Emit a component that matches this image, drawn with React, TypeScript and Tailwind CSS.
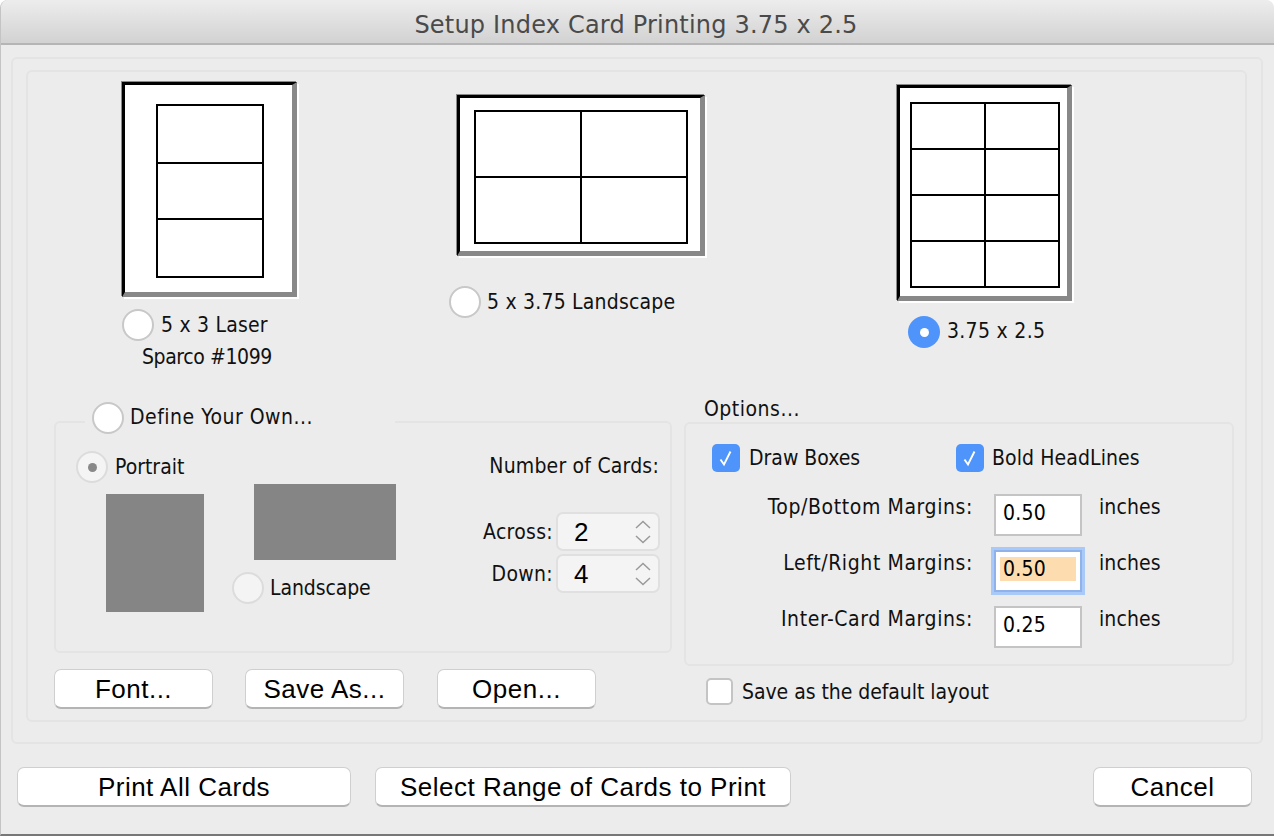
import React from "react";

const FONT = "font-['DejaVu_Sans',sans-serif] [font-stretch:condensed]";
const BTN = "font-['Liberation_Sans',sans-serif]";

function Radio({ kind = "off", className = "" }: { kind?: "off" | "on" | "dimOn" | "dimOff"; className?: string }) {
  const look =
    kind === "on"
      ? "bg-[#4f94fb]"
      : kind === "off"
        ? "bg-white border-2 border-[#c8c8c8]"
        : "bg-[#f4f4f4] border-2 border-[#dcdcdc]";
  return (
    <span className={`flex h-[32px] w-[32px] shrink-0 items-center justify-center rounded-full ${look} ${className}`}>
      {kind === "on" && <span className="h-[9px] w-[9px] rounded-full bg-white" />}
      {kind === "dimOn" && <span className="h-[9px] w-[9px] rounded-full bg-[#888888]" />}
    </span>
  );
}

function Label({ children, className = "", track = "tracking-[0.5px]" }: { children: React.ReactNode; className?: string; track?: string }) {
  return (
    <span className={`${FONT} whitespace-nowrap text-[21px] leading-[24px] text-[#111] ${track} ${className}`}>
      {children}
    </span>
  );
}

function Sheet({ size, inner, gridSize, cells }: { size: string; inner: string; gridSize: string; cells: number }) {
  return (
    <div className={`box-border border-t-[3px] border-l-[3px] border-t-black border-l-black border-r-[5px] border-b-[5px] border-r-[#888888] border-b-[#888888] bg-white shadow-[2px_2px_0_#ffffff,-1px_-1px_0_#8a8a8a] ${size}`}>
      <div className={`grid gap-[2px] bg-black p-[2px] ${gridSize} ${inner}`}>
        {Array.from({ length: cells }).map((_, i) => (
          <div key={i} className="bg-white" />
        ))}
      </div>
    </div>
  );
}

function Check({ on }: { on?: boolean }) {
  return on ? (
    <span className="flex h-[28px] w-[28px] shrink-0 items-center justify-center rounded-[5px] bg-[#4f94fb]">
      <svg width="20" height="20" viewBox="0 0 20 20" fill="none">
        <path d="M4.5 11.5 L8 16.5 L14.5 3.5" stroke="#ffffff" strokeWidth="1.9" />
      </svg>
    </span>
  ) : (
    <span className="h-[27px] w-[27px] shrink-0 rounded-[5px] border-2 border-[#c4c4c4] bg-white" />
  );
}

function Button({ children, className = "" }: { children: React.ReactNode; className?: string }) {
  return (
    <button className={`${BTN} box-border h-[40px] rounded-[7px] border border-[#cfcfcf] border-b-2 border-b-[#b4b4b4] bg-white text-[26px] leading-none tracking-[0.5px] text-black ${className}`}>
      {children}
    </button>
  );
}

function Stepper({ value }: { value: string }) {
  return (
    <div className="box-border flex h-[39px] w-[104px] items-center rounded-[7px] border-2 border-[#e0e0e0] bg-[#f4f4f4] pl-[16px] pr-[5px]">
      <span className={`${BTN} flex-1 text-[26px] leading-none text-black`}>{value}</span>
      <svg width="20" height="26" viewBox="0 0 20 26" fill="none" stroke="#9a9a9a" strokeWidth="1.5">
        <path d="M3 9 L10 2.5 L17 9" />
        <path d="M3 17 L10 23.5 L17 17" />
      </svg>
    </div>
  );
}

function MarginRow({ label, value, focus }: { label: string; value: string; focus?: boolean }) {
  return (
    <div className="flex items-start">
      <div className="flex w-[287px] justify-end pt-[1px]">
        <Label track="tracking-[0.6px]">{label}</Label>
      </div>
      <div
        className={`ml-[21px] box-border flex h-[42px] w-[88px] items-center bg-white px-[4px] pb-[4px] ${
          focus
            ? "border-2 border-[#8fb2ea] shadow-[0_0_0_3px_#a9c9f9]"
            : "border-2 border-[#c4c4c4]"
        }`}
      >
        <Label track="tracking-[0.2px]" className={`block w-full pl-[3px] text-black ${focus ? "bg-[#fdddb0]" : ""}`}>
          {value}
        </Label>
      </div>
      <Label className="ml-[17px] pt-[1px]" track="tracking-[0.1px]">inches</Label>
    </div>
  );
}

export default function App() {
  return (
    <div className="box-border flex h-[836px] w-[1274px] flex-col overflow-hidden rounded-t-[8px] border-b-2 border-l border-b-[#777777] border-l-[#c4c4c4] bg-[#ececec]">
      <div className="flex h-[45px] shrink-0 items-center justify-center rounded-t-[8px] border-b-2 border-b-[#b5b5b5] bg-gradient-to-b from-[#ededed] to-[#d2d2d2] pt-[6px]">
        <span className="pr-[3px] font-['DejaVu_Sans',sans-serif] text-[24px] leading-none tracking-[0.2px] text-[#4a4a4a]">Setup Index Card Printing 3.75 x 2.5</span>
      </div>

      <div className="ml-[10px] mr-[11px] mt-[12px] box-border h-[687px] rounded-[6px] border-2 border-[#e4e4e4] pl-[13px] pr-[14px] pt-[11px]">
        <div className="box-border h-[652px] rounded-[6px] border-2 border-[#e4e4e4]">
          <div className="flex h-[325px] items-start">
            <div className="ml-[94px] mt-[10px] w-[175px]">
              <Sheet size="h-[215px] w-[175px]" inner="ml-[31px] mt-[19px]" gridSize="h-[174px] w-[108px] grid-rows-[56px_54px_56px]" cells={3} />
              <div className="mt-[12px] flex items-center">
                <Radio />
                <Label className="ml-[7px]" track="tracking-[0.2px]">5 x 3 Laser</Label>
              </div>
              <div className="ml-[20px] mt-[4px]">
                <Label track="tracking-[-0.4px]">Sparco #1099</Label>
              </div>
            </div>

            <div className="ml-[152px] mt-[23px] w-[256px]">
              <div className="ml-[8px]">
                <Sheet size="h-[161px] w-[248px]" inner="ml-[14px] mt-[12px]" gridSize="h-[134px] w-[214px] grid-cols-2 grid-rows-2" cells={4} />
              </div>
              <div className="mt-[30px] flex items-center">
                <Radio />
                <Label className="ml-[6px] pb-[1px]" track="tracking-[0.2px]">5 x 3.75 Landscape</Label>
              </div>
            </div>

            <div className="ml-[192px] mt-[13px]">
              <Sheet size="h-[216px] w-[175px]" inner="ml-[10px] mt-[14px]" gridSize="h-[186px] w-[150px] grid-cols-2 grid-rows-4" cells={8} />
              <div className="ml-[11px] mt-[15px] flex items-center">
                <Radio kind="on" />
                <Label className="ml-[7px] pb-[2px]" track="tracking-[0.3px]">3.75 x 2.5</Label>
              </div>
            </div>
          </div>

          <div className="flex items-start">
            <div className="ml-[26px] w-[618px] pt-[24px]">
              <div className="relative box-border flex h-[232px] rounded-[6px] border-2 border-[#e4e4e4]">
                <div className="absolute -top-[21px] left-[29px] flex h-[32px] w-[310px] items-center bg-[#ececec] pl-[7px]">
                  <Radio />
                  <Label className="ml-[6px] pb-[2px]">Define Your Own...</Label>
                </div>

                <div className="ml-[20px] mt-[28px] w-[156px]">
                  <div className="flex items-center">
                    <Radio kind="dimOn" />
                    <Label className="ml-[7px]" track="tracking-[0px]">Portrait</Label>
                  </div>
                  <div className="ml-[30px] mt-[11px] h-[118px] w-[98px] bg-[#858585]" />
                </div>

                <div className="mt-[61px]">
                  <div className="ml-[22px] h-[76px] w-[142px] bg-[#858585]" />
                  <div className="mt-[12px] flex items-center">
                    <Radio kind="dimOff" />
                    <Label className="ml-[6px] pb-[1px]" track="tracking-[-0.1px]">Landscape</Label>
                  </div>
                </div>

                <div className="ml-auto mr-[10px] mt-[31px] flex flex-col items-end">
                  <Label className="mr-[1px]" track="tracking-[0.2px]">Number of Cards:</Label>
                  <div className="mt-[34px] flex items-center">
                    <Label className="mr-[3px]" track="tracking-[0.3px]">Across:</Label>
                    <Stepper value="2" />
                  </div>
                  <div className="mt-[3px] flex items-center">
                    <Label className="mr-[3px]" track="tracking-[0.3px]">Down:</Label>
                    <Stepper value="4" />
                  </div>
                </div>
              </div>

              <div className="mt-[16px] flex">
                <Button className="w-[159px]">Font...</Button>
                <Button className="ml-[32px] w-[159px]">Save As...</Button>
                <Button className="ml-[33px] w-[159px]">Open...</Button>
              </div>
            </div>

            <div className="ml-[12px] w-[550px]">
              <div className="ml-[20px] h-[25px]">
                <Label>Options...</Label>
              </div>
              <div className="box-border h-[244px] rounded-[6px] border-2 border-[#e4e4e4]">
                <div className="ml-[26px] mt-[20px] flex items-center">
                  <Check on />
                  <Label className="ml-[9px] w-[207px]" track="tracking-[0px]">Draw Boxes</Label>
                  <Check on />
                  <Label className="ml-[8px]" track="tracking-[0.1px]">Bold HeadLines</Label>
                </div>
                <div className="mt-[22px] flex flex-col gap-[14px]">
                  <MarginRow label="Top/Bottom Margins:" value="0.50" />
                  <MarginRow label="Left/Right Margins:" value="0.50" focus />
                  <MarginRow label="Inter-Card Margins:" value="0.25" />
                </div>
              </div>
              <div className="ml-[22px] mt-[12px] flex items-center">
                <Check />
                <Label className="ml-[9px]" track="tracking-[-0.05px]">Save as the default layout</Label>
              </div>
            </div>
          </div>
        </div>
      </div>

      <div className="ml-[16px] mr-[22px] mt-[23px] flex">
        <Button className="w-[334px]">Print All Cards</Button>
        <Button className="ml-[24px] w-[416px]">Select Range of Cards to Print</Button>
        <Button className="ml-auto w-[159px]">Cancel</Button>
      </div>
    </div>
  );
}
